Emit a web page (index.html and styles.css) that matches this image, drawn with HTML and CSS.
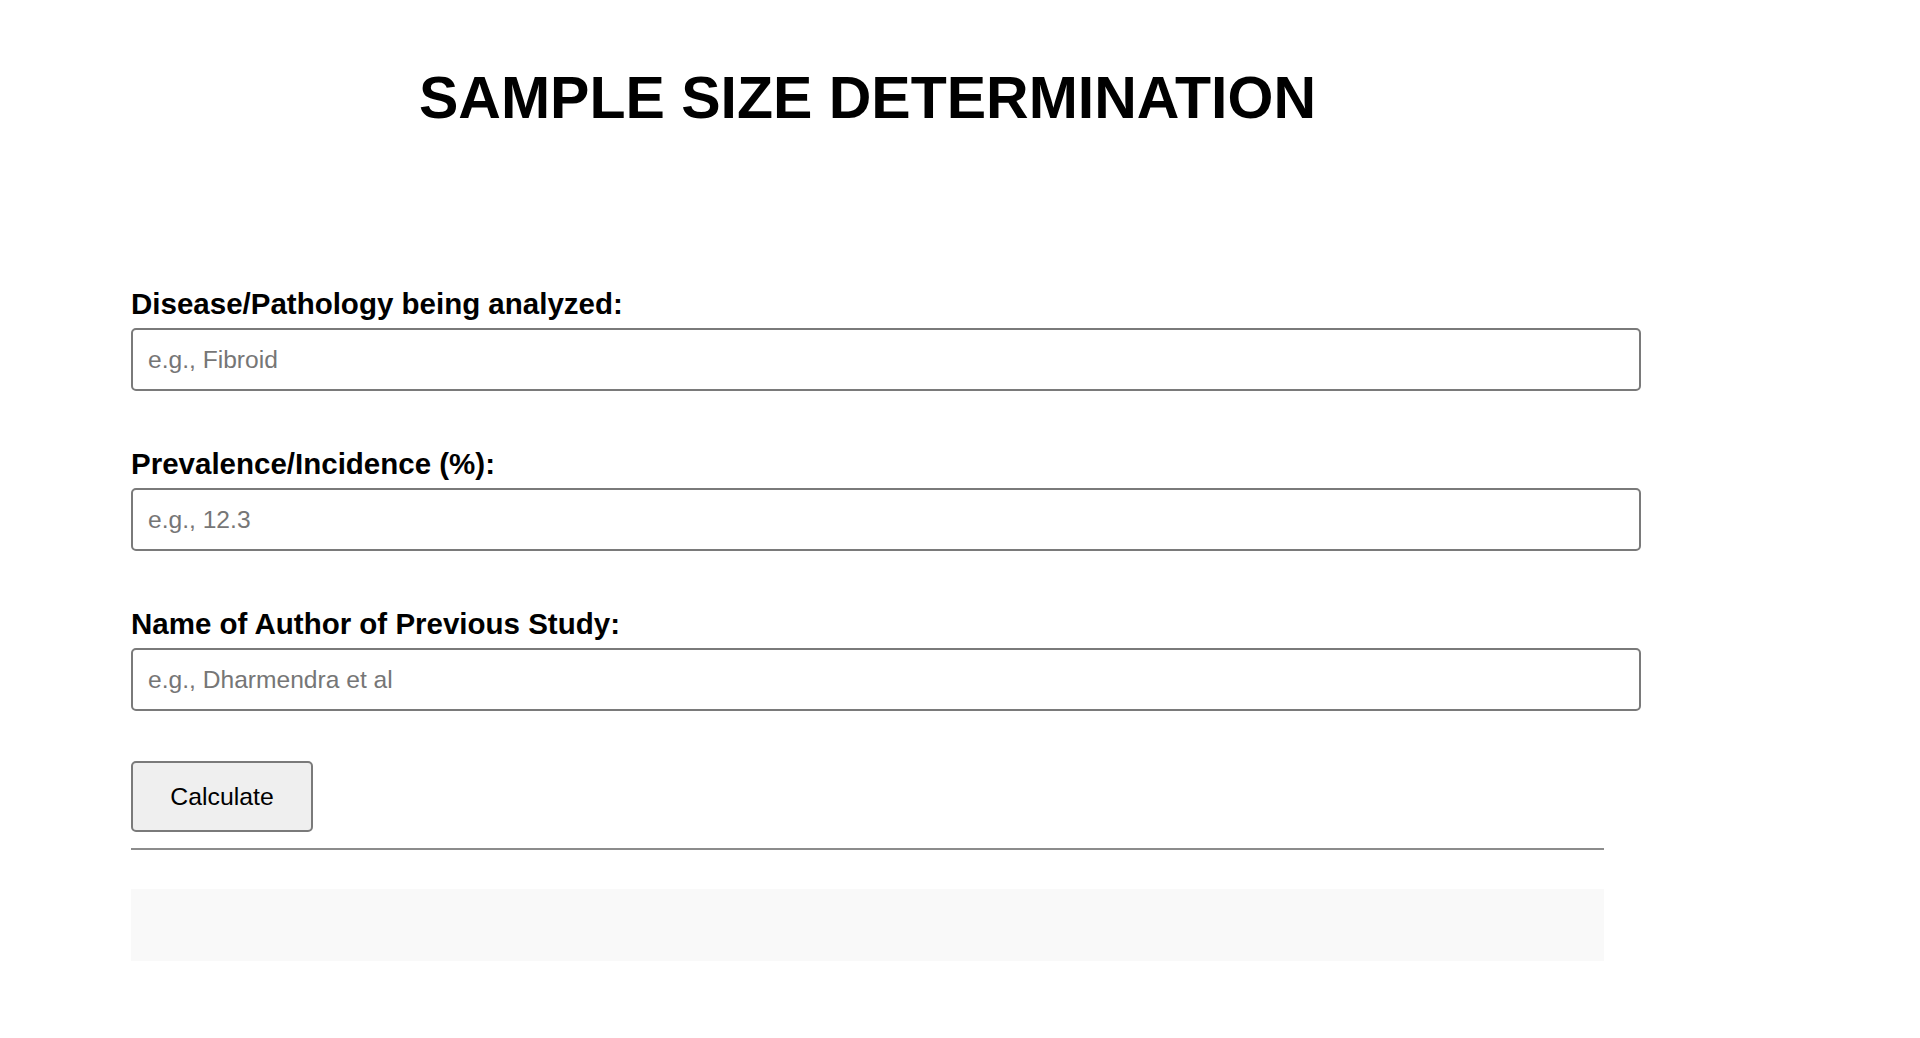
FILE: index.html
```html
<!DOCTYPE html>
<html lang="en">
<head>
<meta charset="utf-8">
<title>Sample Size Determination</title>
<link rel="stylesheet" href="styles.css">
</head>
<body>
<div class="page">
  <h1 class="title">SAMPLE SIZE DETERMINATION</h1>
  <form class="form">
    <div class="field">
      <label class="label" for="disease">Disease/Pathology being analyzed:</label>
      <input class="input" id="disease" type="text" placeholder="e.g., Fibroid">
    </div>
    <div class="field">
      <label class="label" for="prev">Prevalence/Incidence (%):</label>
      <input class="input" id="prev" type="text" placeholder="e.g., 12.3">
    </div>
    <div class="field">
      <label class="label" for="author">Name of Author of Previous Study:</label>
      <input class="input" id="author" type="text" placeholder="e.g., Dharmendra et al">
    </div>
    <button class="btn" type="button">Calculate</button>
  </form>
  <div class="divider"></div>
  <div class="result"></div>
</div>
</body>
</html>
```
FILE: styles.css
```css
html, body {
  margin: 0;
  padding: 0;
  background: #ffffff;
}
body {
  font-family: "Liberation Sans", Arial, sans-serif;
  color: #000;
}
.page {
  width: 1473px;
  margin-left: 131px;
  padding-top: 65px;
}
.title {
  margin: 0;
  text-align: center;
  font-size: 59px;
  font-weight: bold;
  line-height: 67px;
}
.form {
  display: flex;
  flex-direction: column;
  align-items: flex-start;
  margin-top: 155px;
}
.field {
  display: flex;
  flex-direction: column;
  margin-bottom: 56px;
}
.field:last-of-type {
  margin-bottom: 50px;
}
.label {
  font-size: 29.5px;
  font-weight: bold;
  line-height: 33px;
  margin-bottom: 8px;
}
.input {
  box-sizing: border-box;
  width: 1510px;
  height: 63px;
  border: 2px solid #7a7a7a;
  border-radius: 5px;
  padding: 0 15px;
  font-family: "Liberation Sans", Arial, sans-serif;
  font-size: 24.6px;
  color: #000;
  background: #fff;
  outline: none;
}
.input::placeholder {
  color: #767676;
}
.btn {
  box-sizing: border-box;
  width: 182px;
  height: 71px;
  border: 2px solid #7a7a7a;
  border-radius: 5px;
  background: #efefef;
  font-family: "Liberation Sans", Arial, sans-serif;
  font-size: 24.8px;
  color: #000;
  padding: 0;
}
.divider {
  margin-top: 16px;
  height: 0;
  border-top: 2px solid #8c8c8c;
}
.result {
  margin-top: 39px;
  height: 72px;
  background: #f9f9f9;
}
```
